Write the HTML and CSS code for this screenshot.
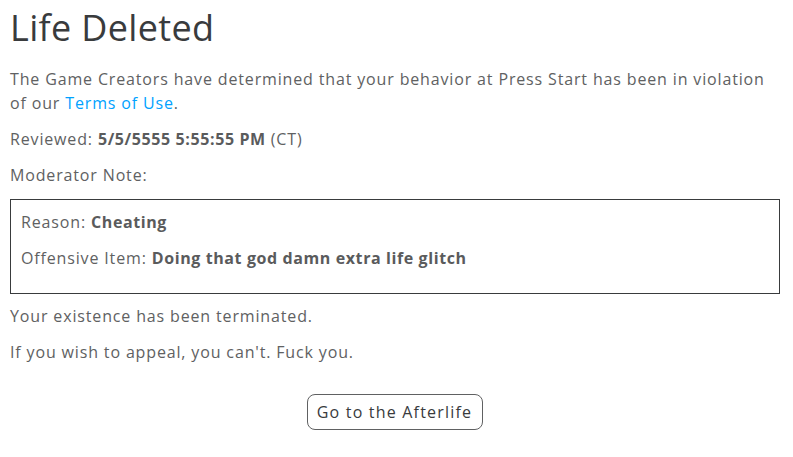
FILE: index.html
```html
<!DOCTYPE html>
<html lang="en">
<head>
<meta charset="utf-8">
<title>Life Deleted</title>
<link rel="stylesheet" href="styles.css">
</head>
<body>
<main class="page">
  <h1 class="title">Life Deleted</h1>
  <p class="text">The Game Creators have determined that your behavior at Press Start has been in violation of our <a class="link" href="#">Terms of Use</a>.</p>
  <p class="text">Reviewed: <b>5/5/5555 5:55:55 PM</b> (CT)</p>
  <p class="text">Moderator Note:</p>
  <section class="note">
    <p class="text">Reason: <b>Cheating</b></p>
    <p class="text">Offensive Item: <b>Doing that god damn extra life glitch</b></p>
  </section>
  <p class="text">Your existence has been terminated.</p>
  <p class="text">If you wish to appeal, you can't. Fuck you.</p>
  <div class="actions">
    <button class="btn" type="button">Go to the Afterlife</button>
  </div>
</main>
</body>
</html>
```
FILE: styles.css
```css
html, body {
  margin: 0;
  padding: 0;
  background: #ffffff;
}
body {
  font-family: "Open Sans", "Noto Sans", sans-serif;
  color: #606162;
  letter-spacing: 0.85px;
}
.page {
  padding: 0 13px 0 10px;
}
.title {
  margin: 0;
  padding-top: 5px;
  font-size: 36px;
  font-weight: 400;
  line-height: 46px;
  letter-spacing: 0.35px;
  color: #393b3d;
  margin-bottom: 16px;
}
.text {
  margin: 0 0 12px;
  font-size: 16px;
  line-height: 24px;
}
.text b {
  font-weight: 700;
  color: #5a5b5c;
  letter-spacing: 0.6px;
}
.link {
  color: #00a2ff;
  text-decoration: none;
}
.note {
  border: 1px solid #393b3d;
  padding: 10px 10px 11px;
  margin-bottom: 10px;
}
.note .text {
  margin-bottom: 12px;
}
.actions {
  display: flex;
  justify-content: center;
  padding-top: 18px;
  padding-right: 1px;
}
.btn {
  font-family: inherit;
  font-size: 16px;
  letter-spacing: 1.2px;
  color: #393b3d;
  background: #ffffff;
  border: 1px solid #606162;
  border-radius: 8px;
  padding: 0;
  height: 36px;
  width: 176px;
}
```
